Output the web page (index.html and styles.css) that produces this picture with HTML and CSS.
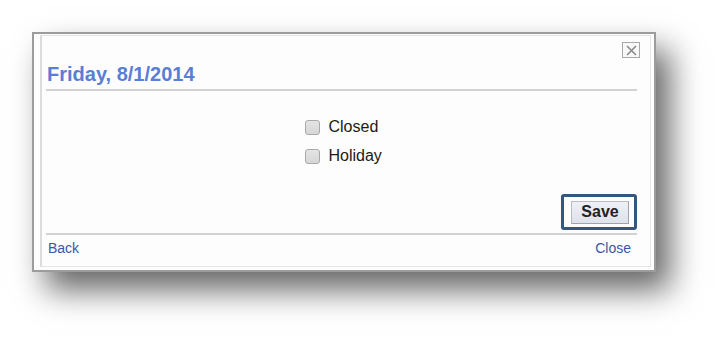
FILE: index.html
```html
<!DOCTYPE html>
<html lang="en">
<head>
    <meta charset="UTF-8">
    <title>Day Settings</title>
    <link rel="stylesheet" href="styles.css">
</head>
<body>
    <!-- Screenshot frame -->
    <div class="frame">
        <div class="dialog">
            <div class="dialog-top">
                <button class="close-x" title="Close">
                    <svg width="11" height="11" viewBox="0 0 11 11">
                        <path d="M1 1 L10 10 M10 1 L1 10" stroke="#8a8a8a" stroke-width="1.6" fill="none"/>
                    </svg>
                </button>
            </div>

            <h1 class="dialog-title">Friday, 8/1/2014</h1>

            <!-- Day options -->
            <div class="options">
                <label class="option"><input type="checkbox"> Closed</label>
                <label class="option"><input type="checkbox"> Holiday</label>
            </div>

            <div class="actions">
                <div class="highlight">
                    <button class="save-button">Save</button>
                </div>
            </div>

            <div class="footer">
                <a href="#">Back</a>
                <a href="#">Close</a>
            </div>
        </div>
    </div>
</body>
</html>
```

FILE: styles.css
```css
html {
    background: #ffffff;
}

body {
    margin: 0;
    min-height: 337px;
    padding: 32px 0 40px 32px;
    box-sizing: border-box;
    background: #ffffff;
    font-family: "Liberation Sans", Arial, sans-serif;
}

/* Frame with drop shadow */
.frame {
    box-sizing: border-box;
    width: 624px;
    height: 240px;
    padding: 1px 3px 3px 6px;
    background: #fdfdfd;
    border: 2px solid #9c9c9c;
    box-shadow: 14px 18px 30px rgba(0, 0, 0, 0.6);
}

/* Dialog */
.dialog {
    box-sizing: border-box;
    height: 100%;
    padding: 0 13px 0 4px;
    border-left: 2px solid #dcdcdc;
    border-top: 1px solid #e2e2e2;
    border-right: 1px solid #e6e6e6;
    border-bottom: 1px solid #e6e6e6;
    background: #fdfdfd;
    display: flex;
    flex-direction: column;
}

.dialog-top {
    display: flex;
    justify-content: flex-end;
    height: 26px;
    padding-top: 6px;
    box-sizing: border-box;
    margin-right: -3px;
}

.close-x {
    width: 18px;
    height: 16px;
    padding: 0;
    border: 1px solid #a8a8a8;
    background: #f8f8f8;
    display: flex;
    align-items: center;
    justify-content: center;
    cursor: pointer;
}

.dialog-title {
    margin: 0;
    height: 27px;
    padding-left: 1px;
    font-size: 20px;
    line-height: 24px;
    font-weight: bold;
    color: #5a7ed6;
    border-bottom: 2px solid #d2d2d2;
}

/* Checkboxes */
.options {
    display: flex;
    flex-direction: column;
    align-items: center;
    gap: 5px;
    margin-top: 24px;
    padding-left: 6px;
}

.option {
    display: flex;
    align-items: center;
    gap: 9px;
    width: 80px;
    height: 24px;
    font-size: 16px;
    color: #1a1a1a;
}

.option input {
    appearance: none;
    -webkit-appearance: none;
    margin: 0;
    width: 15px;
    height: 15px;
    border: 1px solid #a9a9a9;
    border-radius: 3px;
    background: linear-gradient(#e4e4e4, #d6d6d6);
}

/* Save */
.actions {
    display: flex;
    justify-content: flex-end;
    margin-top: 26px;
}

.highlight {
    box-sizing: border-box;
    width: 76px;
    height: 36px;
    border: 3px solid #34577f;
    border-radius: 3px;
    display: flex;
    align-items: center;
    justify-content: flex-end;
    padding-right: 5px;
}

.save-button {
    width: 58px;
    height: 23px;
    padding: 0;
    font-family: "Liberation Sans", Arial, sans-serif;
    font-size: 16px;
    font-weight: bold;
    color: #222222;
    background: linear-gradient(#eef0f6, #dfe2ea);
    border: 1px solid #b9bcc4;
    border-right-color: #9fa2aa;
    border-bottom-color: #9fa2aa;
    cursor: pointer;
}

/* Footer links */
.footer {
    margin-top: 3px;
    padding-top: 5px;
    border-top: 2px solid #d2d2d2;
    display: flex;
    justify-content: space-between;
    padding-left: 2px;
    padding-right: 6px;
}

.footer a {
    font-size: 14px;
    color: #3a55a8;
    text-decoration: none;
}
```
